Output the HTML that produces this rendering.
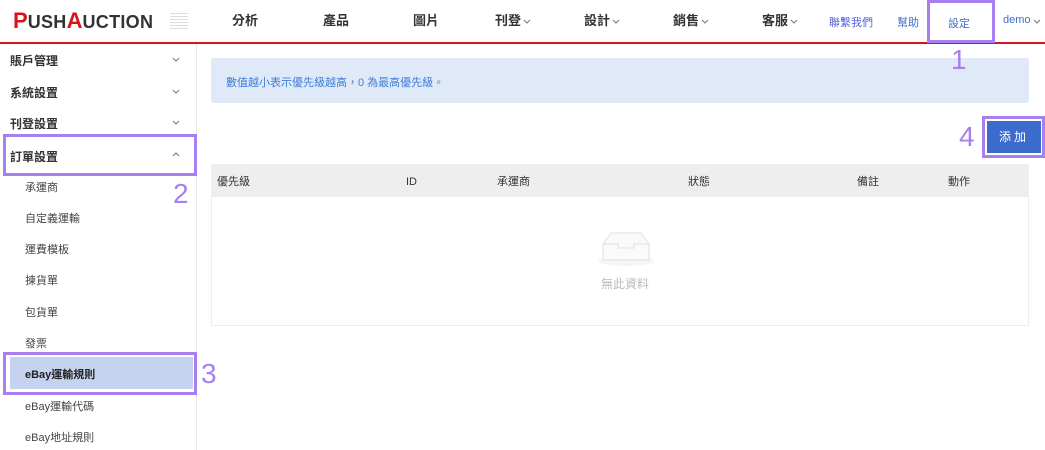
<!DOCTYPE html>
<html><head><meta charset="utf-8"><style>
*{margin:0;padding:0;box-sizing:border-box}
body{width:1045px;height:450px;overflow:hidden;background:#fff;font-family:"Liberation Sans","Noto Sans CJK TC",sans-serif;position:relative;color:#333}
.a{position:absolute;white-space:nowrap}
.nav{font-size:13px;font-weight:bold;color:#333;top:12px;line-height:18px}
.side{font-size:12px;color:#333;left:10px;font-weight:bold}
.sub{font-size:11px;color:#444;left:25px}
.chev{position:absolute;left:172px}
.pb{position:absolute;border:3px solid #a77ff0;z-index:5}
.num{position:absolute;color:#a77ff0;font-size:28px;z-index:5;line-height:28px}
.th{font-size:11px;color:#333;top:174px;line-height:16px}
</style></head><body>
<svg width="0" height="0" style="position:absolute"><defs><path id="dn" d="M1 1 L4 4 L7 1" fill="none" stroke="#777" stroke-width="1"/><path id="up" d="M1 4 L4 1 L7 4" fill="none" stroke="#777" stroke-width="1"/></defs></svg>
<div class="a" style="left:13px;top:9px;font-size:22px;font-weight:bold;color:#333;line-height:24px"><span style="color:#d9141d">P</span><span style="font-size:18px;letter-spacing:0.3px">USH</span><span style="color:#d9141d">A</span><span style="font-size:18px;letter-spacing:0.3px">UCTION</span></div>
<div class="a" style="left:170px;top:13px;width:18px;height:17px;background:repeating-linear-gradient(#ddd 0 1px,#fff 1px 3px)"></div>
<div class="a nav" style="left:232px">分析</div>
<div class="a nav" style="left:323px">產品</div>
<div class="a nav" style="left:413px">圖片</div>
<div class="a nav" style="left:495px">刊登</div><svg class="a" style="left:523px;top:19px" width="8" height="6"><use href="#dn"/></svg>
<div class="a nav" style="left:584px">設計</div><svg class="a" style="left:612px;top:19px" width="8" height="6"><use href="#dn"/></svg>
<div class="a nav" style="left:673px">銷售</div><svg class="a" style="left:701px;top:19px" width="8" height="6"><use href="#dn"/></svg>
<div class="a nav" style="left:762px">客服</div><svg class="a" style="left:790px;top:19px" width="8" height="6"><use href="#dn"/></svg>
<div class="a" style="left:829px;top:14px;font-size:11px;color:#5a62d8">聯繫我們</div>
<div class="a" style="left:897px;top:14px;font-size:11px;color:#3e6fc8">幫助</div>
<div class="a" style="left:948px;top:15px;font-size:11px;color:#3e6fc8">設定</div>
<div class="a" style="left:1003px;top:14px;font-size:11px;color:#3e6fc8">demo</div><svg class="a" style="left:1033px;top:19px" width="8" height="6"><use href="#dn"/></svg>
<div class="pb" style="left:927px;top:0;width:68px;height:43px"></div>
<div class="num" style="left:951px;top:46px">1</div>
<div class="a" style="left:0;top:42px;width:1045px;height:2px;background:#d9141d"></div>
<div class="a" style="left:196px;top:44px;width:1px;height:406px;background:#e8e8e8"></div>

<div class="a side" style="top:52px">賬戶管理</div><svg class="chev" style="top:57px" width="8" height="6"><use href="#dn"/></svg>
<div class="a side" style="top:84px">系統設置</div><svg class="chev" style="top:89px" width="8" height="6"><use href="#dn"/></svg>
<div class="a side" style="top:115px">刊登設置</div><svg class="chev" style="top:120px" width="8" height="6"><use href="#dn"/></svg>
<div class="a side" style="top:148px">訂單設置</div><svg class="chev" style="top:152px" width="8" height="6"><use href="#up"/></svg>
<div class="pb" style="left:3px;top:134px;width:194px;height:42px"></div>
<div class="num" style="left:173px;top:180px">2</div>
<div class="a sub" style="top:179px">承運商</div>
<div class="a sub" style="top:210px">自定義運輸</div>
<div class="a sub" style="top:241px">運費模板</div>
<div class="a sub" style="top:272px">揀貨單</div>
<div class="a sub" style="top:304px">包貨單</div>
<div class="a sub" style="top:335px">發票</div>
<div class="a" style="left:10px;top:357px;width:183px;height:32px;background:#c5d3ee"></div>
<div class="pb" style="left:3px;top:352px;width:194px;height:43px"></div>
<div class="a sub" style="top:366px;font-weight:bold;color:#222">eBay運輸規則</div>
<div class="num" style="left:201px;top:360px">3</div>
<div class="a sub" style="top:398px">eBay運輸代碼</div>
<div class="a sub" style="top:429px">eBay地址規則</div>

<div class="a" style="left:211px;top:58px;width:818px;height:45px;background:#dfe9f7;border-radius:3px"></div>
<div class="a" style="left:226px;top:74px;font-size:11px;color:#3e7ed8">數值越小表示優先級越高，0 為最高優先級。</div>

<div class="pb" style="left:982px;top:116px;width:63px;height:42px"></div>
<div class="a" style="left:987px;top:121px;width:54px;height:32px;background:#3b6bcc;color:#fff;font-size:12px;text-align:center;line-height:32px;letter-spacing:3px">添加</div>
<div class="num" style="left:959px;top:123px">4</div>

<div class="a" style="left:211px;top:164px;width:818px;height:162px;border:1px solid #eee"></div>
<div class="a" style="left:211px;top:164px;width:818px;height:33px;background:#eeeeee"></div>
<div class="a th" style="left:217px">優先級</div>
<div class="a th" style="left:406px">ID</div>
<div class="a th" style="left:497px">承運商</div>
<div class="a th" style="left:688px">狀態</div>
<div class="a th" style="left:857px">備註</div>
<div class="a th" style="left:948px">動作</div>
<svg class="a" style="left:596px;top:230px" width="60" height="38"><ellipse cx="30" cy="31" rx="28" ry="5" fill="#f5f5f5"/><path d="M7 14 L15 3 H45 L53 14 V30 H7 Z" fill="#fafafa" stroke="#e0e0e0"/><path d="M7 14 H22 V18 H38 V14 H53" fill="none" stroke="#e0e0e0"/></svg>
<div class="a" style="left:601px;top:275px;font-size:12px;color:#bbb">無此資料</div>
</body></html>
